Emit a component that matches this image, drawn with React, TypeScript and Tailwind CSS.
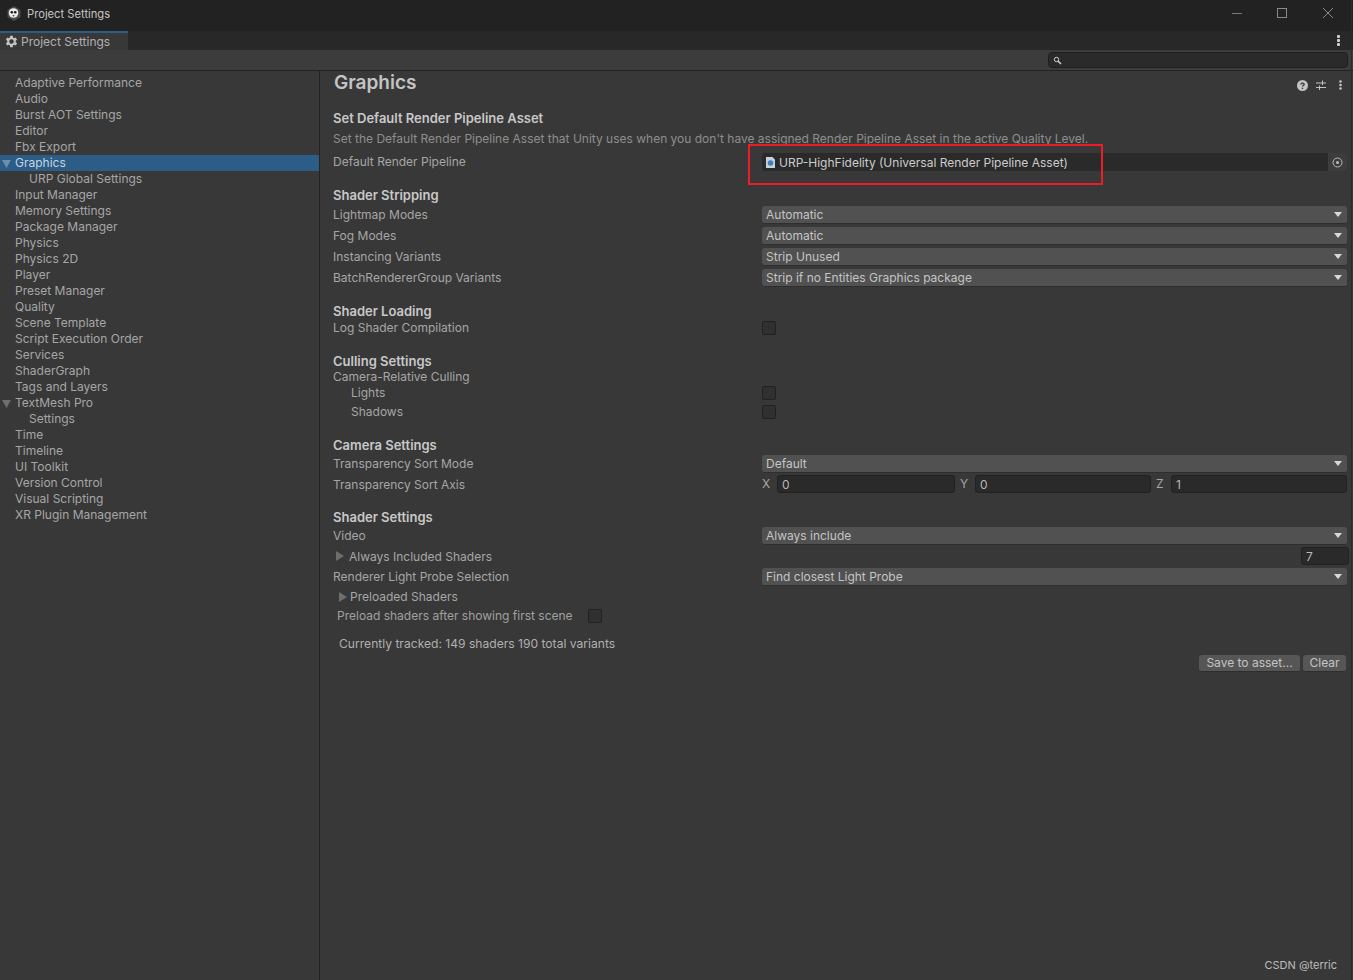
import React from "react";

const menu: [string, number, boolean?][] = [
  ["Adaptive Performance", 0], ["Audio", 0], ["Burst AOT Settings", 0], ["Editor", 0], ["Fbx Export", 0],
  ["Graphics", 0, true], ["URP Global Settings", 1], ["Input Manager", 0], ["Memory Settings", 0], ["Package Manager", 0],
  ["Physics", 0], ["Physics 2D", 0], ["Player", 0], ["Preset Manager", 0], ["Quality", 0], ["Scene Template", 0],
  ["Script Execution Order", 0], ["Services", 0], ["ShaderGraph", 0], ["Tags and Layers", 0], ["TextMesh Pro", 0, true],
  ["Settings", 1], ["Time", 0], ["Timeline", 0], ["UI Toolkit", 0], ["Version Control", 0], ["Visual Scripting", 0], ["XR Plugin Management", 0],
];

function Down() {
  return <svg width="8" height="5" viewBox="0 0 8 5" className="shrink-0"><path d="M0 0H8L4 5Z" fill="#d8d8d8" /></svg>;
}
function Fold({ color = "#777" }: { color?: string }) {
  return <svg width="9" height="8" viewBox="0 0 9 8"><path d="M0 0H9L4.500 8Z" fill={color} /></svg>;
}
function Tri() {
  return <svg width="8" height="10" viewBox="0 0 8 10"><path d="M0 0L8 5L0 10Z" fill="#6e6e6e" /></svg>;
}

function Drop({ v }: { v: string }) {
  return (
    <div className="flex h-[18px] items-center justify-between rounded-[3px] border-b border-[#2e2e2e] bg-[#515151] pl-[4px] pr-[5px] text-[#c4c4c4]">
      <span>{v}</span><Down />
    </div>
  );
}
function Check() {
  return <div className="h-[14px] w-[14px] rounded-[2px] border border-[#212121] bg-[#303030]" />;
}
function H({ t, className = "" }: { t: string; className?: string }) {
  return <div className={"flex h-[18px] items-center text-[13px] font-semibold text-[#c8c8c8] " + className}>{t}</div>;
}
function Row({ label, children, className = "h-[18px]", indent = "" }: { label: string; children?: React.ReactNode; className?: string; indent?: string }) {
  return (
    <div className={"flex items-center " + className}>
      <div className={"w-[429px] shrink-0 text-[#a6a6a6] " + indent}>{label}</div>
      <div className="min-w-0 flex-1">{children}</div>
    </div>
  );
}
function Num({ v, className }: { v: string; className: string }) {
  return <div className={"flex h-[18px] items-center rounded-[3px] border border-[#212121] bg-[#2a2a2a] pl-[4px] pt-[1px] text-[#b8b8b8] " + className}>{v}</div>;
}
function Btn({ t, className = "" }: { t: string; className?: string }) {
  return <div className={"flex h-[17px] items-center justify-center rounded-[3px] border-b border-[#2e2e2e] bg-[#565656] text-[#c4c4c4] " + className}>{t}</div>;
}

export default function App() {
  return (
    <div className="relative flex h-[980px] w-[1353px] flex-col overflow-hidden bg-[#383838] text-[12px] [font-family:Inter,'Liberation_Sans',sans-serif]">
      {/* title bar */}
      <div className="flex h-[31px] items-center bg-[#222222] pl-[7px] text-[#c4c4c4]">
        <svg width="14" height="15" viewBox="0 0 14 15" className="mb-[5px]"><path d="M7 0L13.500 3.700V11.300L7 15L0.500 11.300V3.700Z" fill="#4a4a4a" /><circle cx="6.500" cy="7" r="4.800" fill="#ececec" /><circle cx="4.800" cy="6.200" r="1.300" fill="#1c1c1c" /><circle cx="8.200" cy="6.200" r="1.300" fill="#1c1c1c" /><path d="M5.300 9.300H7.700L6.500 10.700Z" fill="#1c1c1c" /></svg>
        <span className="mb-[3px] ml-[6px] text-[11.200px]">Project Settings</span>
        <div className="ml-auto flex items-center text-[#8a8a8a]">
          <svg width="12" height="12" viewBox="0 0 12 12" className="mb-[5px] mr-[33px]"><path d="M1 6.500H11" stroke="#777" /></svg>
          <svg width="12" height="12" viewBox="0 0 12 12" className="mb-[5px] mr-[34px]"><rect x="1.500" y="1.500" width="9" height="9" stroke="#8a8a8a" fill="none" /></svg>
          <svg width="12" height="12" viewBox="0 0 12 12" className="mb-[5px] mr-[19px]"><path d="M1 1L11 11M11 1L1 11" stroke="#8a8a8a" /></svg>
        </div>
      </div>
      {/* tab bar */}
      <div className="flex h-[19px] items-stretch justify-between bg-[#282828]">
        <div className="flex w-[128px] items-center gap-[3px] border-t-2 border-[#2c5d87] bg-[#383838] pl-[5px] text-[#b0b0b0]">
          <svg width="13" height="13" viewBox="3 2 20 20" fill="#c4c4c4"><path d="M19.400 13a7.600 7.600 0 0 0 0-2l2.100-1.600-2-3.500-2.500 1a7.600 7.600 0 0 0-1.700-1L15 3.300h-4l-.4 2.600a7.600 7.600 0 0 0-1.700 1l-2.500-1-2 3.500L6.500 11a7.600 7.600 0 0 0 0 2l-2.100 1.600 2 3.500 2.500-1a7.600 7.600 0 0 0 1.700 1l.4 2.600h4l.4-2.600a7.600 7.600 0 0 0 1.700-1l2.500 1 2-3.500zM13 15.500a3.500 3.500 0 1 1 0-7 3.500 3.500 0 0 1 0 7z" /></svg>
          <span>Project Settings</span>
        </div>
        <div className="flex items-center pr-[13px]">
          <svg width="3" height="11" viewBox="0 0 3 11" fill="#d0d0d0"><rect y="0" width="3" height="3" rx="1" /><rect y="4" width="3" height="3" rx="1" /><rect y="8" width="3" height="3" rx="1" /></svg>
        </div>
      </div>
      {/* search bar */}
      <div className="flex h-[21px] items-center justify-end border-b border-[#232323] bg-[#3c3c3c] pr-[5px]">
        <div className="flex h-[16px] w-[300px] items-center rounded-[4px] border border-[#1f1f1f] bg-[#2a2a2a] pl-[4px]">
          <svg width="9" height="9" viewBox="0 0 9 9"><circle cx="3.500" cy="3.500" r="2.200" stroke="#d0d0d0" fill="none" /><path d="M5 5L8 8" stroke="#d0d0d0" strokeWidth="1.500" /></svg>
        </div>
      </div>
      {/* body */}
      <div className="flex min-h-0 flex-1">
        <div className="w-[320px] shrink-0 border-r border-[#232323] pt-[4px]">
          {menu.map(([t, lvl, fold]) => (
            <div key={t} className={"relative flex h-[16px] items-center " + (lvl ? "pl-[29px] " : "pl-[15px] ") + (t === "Graphics" ? "bg-[#2c5d87] text-[#c4d4e2]" : "text-[#a6a6a6]")}>
              {fold && <span className="absolute left-[2px] top-[5px] flex"><Fold color={t === "Graphics" ? "#6d8faa" : "#6e6e6e"} /></span>}
              {t}
            </div>
          ))}
        </div>
        <div className="min-w-0 flex-1 pl-[13px] pr-[6px]">
          <div className="flex h-[25px] items-center justify-between">
            <div className="pl-[1px] text-[19px] font-semibold text-[#c4c4c4]">Graphics</div>
            <div className="flex items-center pr-[5px] pt-[3px]">
              <svg width="11" height="11" viewBox="0 0 10 10"><circle cx="5" cy="5" r="5" fill="#c4c4c4" /><path d="M3.500 4C3.500 2.500 6.500 2.500 6.500 4C6.500 5 5 5 5 6" stroke="#383838" strokeWidth="1.200" fill="none" /><rect x="4.400" y="7" width="1.200" height="1.200" fill="#383838" /></svg>
              <svg width="10" height="10" viewBox="0 0 10 10" fill="none" stroke="#c4c4c4" className="ml-[8px]"><path d="M0 3H10M0 7.500H10" /><path d="M6.500 0.500V5M3.500 5.500V10" /></svg>
              <svg width="3" height="10" viewBox="0 0 3 10" fill="#c4c4c4" className="ml-[13px]"><circle cx="1.500" cy="1.500" r="1.300" /><circle cx="1.500" cy="5" r="1.300" /><circle cx="1.500" cy="8.500" r="1.300" /></svg>
            </div>
          </div>
          <H t="Set Default Render Pipeline Asset" className="mt-[14px]" />
          <div className="mt-[2px] flex h-[18px] items-center text-[#8e8e8e]">Set the Default Render Pipeline Asset that Unity uses when you don't have assigned Render Pipeline Asset in the active Quality Level.</div>
          <Row label="Default Render Pipeline" className="mt-[5px] h-[18px]">
            <div className="flex h-[18px] items-center rounded-[3px] bg-[#2a2a2a] pl-[4px] text-[#cccccc]">
              <svg width="9" height="11" viewBox="0 0 9 11" className="mr-[4px]"><path d="M0 0H6.500L9 2.500V11H0Z" fill="#c8d0da" /><circle cx="4.500" cy="6" r="2.800" fill="#3f7fbf" /></svg>
              <span className="pt-[1px]">URP-HighFidelity (Universal Render Pipeline Asset)</span>
              <div className="ml-auto flex h-[18px] w-[19px] items-center justify-center rounded-r-[3px] bg-[#3d3d3d]">
                <svg width="11" height="11" viewBox="0 0 11 11"><circle cx="5.500" cy="5.500" r="4.500" stroke="#bbb" fill="none" /><circle cx="5.500" cy="5.500" r="1.500" fill="#bbb" /></svg>
              </div>
            </div>
          </Row>
          <H t="Shader Stripping" className="mt-[16px]" />
          <Row label="Lightmap Modes" className="mt-[1px] h-[18px]"><Drop v="Automatic" /></Row>
          <Row label="Fog Modes" className="mt-[3px] h-[18px]"><Drop v="Automatic" /></Row>
          <Row label="Instancing Variants" className="mt-[3px] h-[18px]"><Drop v="Strip Unused" /></Row>
          <Row label="BatchRendererGroup Variants" className="mt-[3px] h-[18px]"><Drop v="Strip if no Entities Graphics package" /></Row>
          <H t="Shader Loading" className="mt-[16px]" />
          <Row label="Log Shader Compilation" className="mt-[-2px] h-[18px]"><Check /></Row>
          <H t="Culling Settings" className="mt-[16px]" />
          <Row label="Camera-Relative Culling" className="mt-[-3px] h-[18px]" />
          <Row label="Lights" indent="pl-[18px]" className="mt-[-2px] h-[18px]"><Check /></Row>
          <Row label="Shadows" indent="pl-[18px]" className="mt-[1px] h-[18px]"><Check /></Row>
          <H t="Camera Settings" className="mt-[16px]" />
          <Row label="Transparency Sort Mode" className="mt-[0px] h-[18px]"><Drop v="Default" /></Row>
          <Row label="Transparency Sort Axis" indent="pt-[2px]" className="mt-[2px] h-[18px]">
            <div className="flex items-center text-[#a6a6a6]">
              <span className="w-[15px]">X</span><Num v="0" className="w-[178px]" />
              <span className="ml-[5px] w-[15px]">Y</span><Num v="0" className="w-[176px]" />
              <span className="ml-[5px] w-[15px]">Z</span><Num v="1" className="flex-1" />
            </div>
          </Row>
          <H t="Shader Settings" className="mt-[16px]" />
          <Row label="Video" className="mt-[0px] h-[18px]"><Drop v="Always include" /></Row>
          <div className="mt-[2px] flex h-[18px] items-center text-[#a6a6a6]">
            <span className="ml-[3px] flex w-[13px]"><Tri /></span><span className="pt-[1px]">Always Included Shaders</span>
            <Num v="7" className="ml-auto mr-[-2px] w-[48px]" />
          </div>
          <Row label="Renderer Light Probe Selection" className="mt-[3px] h-[18px]"><Drop v="Find closest Light Probe" /></Row>
          <div className="mt-[2px] flex h-[18px] items-center text-[#a6a6a6]">
            <span className="ml-[6px] flex w-[11px]"><Tri /></span>Preloaded Shaders
          </div>
          <div className="mt-[1px] flex h-[18px] items-center text-[#a0a0a0]">
            <span className="ml-[4px] w-[251px]">Preload shaders after showing first scene</span><Check />
          </div>
          <div className="mt-[10px] flex h-[18px] items-center pl-[6px] text-[12.100px] text-[#b0b0b0]">Currently tracked: 149 shaders 190 total variants</div>
          <div className="mt-[2px] flex justify-end gap-[3px] pr-[1px]">
            <Btn t="Save to asset..." className="w-[101px]" /><Btn t="Clear" className="w-[43px]" />
          </div>
        </div>
      </div>
      {/* annotation box, window edge and watermark */}
      <div className="pointer-events-none absolute left-[748px] top-[144px] h-[41px] w-[355px] border-2 border-[#ee1c25]" />
      <div className="pointer-events-none absolute left-[1351px] top-0 h-full w-[1px] bg-[#2b2b2b]" />
      <div className="absolute right-[16px] top-[957px] text-[11px] text-[#bdbdbd]">CSDN @terric</div>
    </div>
  );
}
